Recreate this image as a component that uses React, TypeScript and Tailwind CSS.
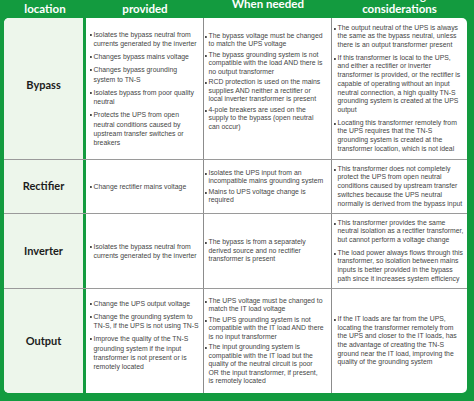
import React from "react";

type Row = {
  label: string;
  h: string;
  c2: string[][];
  c3: string[][];
  c4: string[][];
  lx?: string;
  c2x?: string;
  c3x?: string;
  c4x?: string;
};

const rows: Row[] = [
  {
    label: "Bypass",
    h: "h-[142px]",
    lx: "pb-[7px]",
    c2: [
      ["Isolates the bypass neutral from", "currents generated by the inverter"],
      ["Changes bypass mains voltage"],
      ["Changes bypass grounding", "system to TN-S"],
      ["Isolates bypass from poor quality", "neutral"],
      ["Protects the UPS from open", "neutral conditions caused by", "upstream transfer switches or", "breakers"],
    ],
    c3: [
      ["The bypass voltage must be changed", "to match the UPS voltage"],
      ["The bypass grounding system is not", "compatible with the load AND there is", "no output transformer"],
      ["RCD protection is used on the mains", "supplies AND neither a rectifier or", "local inverter transformer is present"],
      ["4-pole breakers are used on the", "supply to the bypass (open neutral", "can occur)"],
    ],
    c3x: "pb-[14px]",
    c4: [
      ["The output neutral of the UPS is always", "the same as the bypass neutral, unless", "there is an output transformer present"],
      [
        "If this transformer is local to the UPS,",
        "and either a rectifier or inverter",
        "transformer is provided, or the rectifier is",
        "capable of operating without an input",
        "neutral connection, a high quality TN-S",
        "grounding system is created at the UPS",
        "output",
      ],
      ["Locating this transformer remotely from", "the UPS requires that the TN-S", "grounding system is created at the", "transformer location, which is not ideal"],
    ],
  },
  {
    label: "Rectifier",
    h: "h-[54px]",
    c2: [["Change rectifier mains voltage"]],
    c3: [
      ["Isolates the UPS input from an", "incompatible mains grounding system"],
      ["Mains to UPS voltage change is", "required"],
    ],
    c4: [
      [
        "This transformer does not completely",
        "protect the UPS from open neutral",
        "conditions caused by upstream transfer",
        "switches because the UPS neutral",
        "normally is derived from the bypass input",
      ],
    ],
  },
  {
    label: "Inverter",
    h: "h-[75px]",
    c2: [["Isolates the bypass neutral from", "currents generated by the inverter"]],
    c3: [["The bypass is from a separately", "derived source and no rectifier", "transformer is present"]],
    c4: [
      ["This transformer provides the same", "neutral isolation as a rectifier transformer,", "but cannot perform a voltage change"],
      ["The load power always flows through this", "transformer, so isolation between mains", "inputs is better provided in the bypass", "path since it increases system efficiency"],
    ],
  },
  {
    label: "Output",
    h: "h-[104px]",
    c2: [
      ["Change the UPS output voltage"],
      ["Change the grounding system to", "TN-S, if the UPS is not using TN-S"],
      ["Improve the quality of the TN-S", "grounding system if the input", "transformer is not present or is", "remotely located"],
    ],
    c2x: "pb-[12px]",
    c3: [
      ["The UPS voltage must be changed to", "match the IT load voltage"],
      ["The UPS grounding system is not", "compatible with the IT load AND there", "is no input transformer"],
      ["The input grounding system is", "compatible with the IT load but the", "quality of the neutral circuit is poor", "OR the input transformer, if present,", "is remotely located"],
    ],
    c4: [
      [
        "If the IT loads are far from the UPS,",
        "locating the transformer remotely from",
        "the UPS and closer to the IT loads, has",
        "the advantage of creating the TN-S",
        "ground near the IT load, improving the",
        "quality of the grounding system",
      ],
    ],
  },
];

function Bullets({ items, gap, lead }: { items: string[][]; gap: string; lead: string }) {
  return (
    <div className={`flex flex-col origin-left scale-x-[0.88] ${gap}`}>
      {items.map((lines, i) => (
        <div key={i} className="flex items-start">
          <div className="mt-[4px] mr-[2px] h-[2px] w-[2px] shrink-0 bg-[#4a4a4a]" />
          <div className={`whitespace-nowrap ${lead}`}>
            {lines.map((l, j) => (
              <div key={j}>{l}</div>
            ))}
          </div>
        </div>
      ))}
    </div>
  );
}

export default function App() {
  const head = "font-['Lato','Liberation_Sans',sans-serif] font-bold text-white text-[11.5px] leading-[13px] text-center";
  return (
    <div className="w-[474px] h-[401px] overflow-hidden bg-[#139b3f]">
      <div className="-mt-[14px] flex h-[32px] pl-[4px] pr-[7px]">
        <div className={`w-[82px] flex flex-col items-center justify-center ${head}`}>
          <div>Transformer</div>
          <div>location</div>
        </div>
        <div className={`w-[118px] flex flex-col items-center justify-center ${head}`}>
          <div>Benefits</div>
          <div>provided</div>
        </div>
        <div className={`w-[128px] flex flex-col items-center justify-center pt-[3px] ${head}`}>
          <div>When needed</div>
        </div>
        <div className={`w-[135px] flex flex-col items-center justify-center ${head}`}>
          <div>Other design</div>
          <div>considerations</div>
        </div>
      </div>
      <div className="ml-[4px] mr-[7px] h-[375px] overflow-hidden rounded-[5px] bg-white font-['Liberation_Sans','Arial',sans-serif] text-[7.8px] text-[#454545]">
        {rows.map((r, idx) => (
          <div key={r.label} className={`flex ${r.h} ${idx < rows.length - 1 ? "border-b border-[#9a9a9a]" : ""}`}>
            <div className={`w-[82px] shrink-0 flex items-center justify-center border-r-[3px] border-[#139b3f] bg-[#edf6eb] font-['Lato','Liberation_Sans',sans-serif] font-bold text-[11px] text-[#1c1c1c] ${r.lx ?? ""}`}>
              {r.label}
            </div>
            <div className={`w-[118px] shrink-0 flex items-center border-r border-[#8c8c8c] pl-[4px] ${r.c2x ?? ""}`}>
              <Bullets items={r.c2} gap="gap-[4px]" lead="leading-[9.2px]" />
            </div>
            <div className={`w-[128px] shrink-0 flex items-center border-r border-[#8c8c8c] pl-[1px] ${r.c3x ?? ""}`}>
              <Bullets items={r.c3} gap="gap-[2px]" lead="leading-[8.5px]" />
            </div>
            <div className={`w-[135px] shrink-0 flex items-center pl-[2px] ${r.c4x ?? ""}`}>
              <Bullets items={r.c4} gap="gap-[4px]" lead="leading-[8.7px]" />
            </div>
          </div>
        ))}
      </div>
    </div>
  );
}
